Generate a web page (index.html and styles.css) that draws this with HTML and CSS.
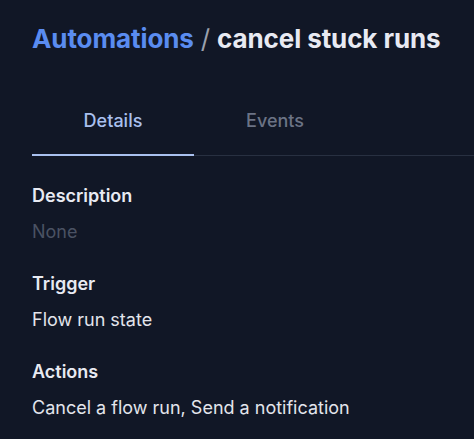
FILE: index.html
```html
<!DOCTYPE html>
<html>
<head>
<meta charset="utf-8">
<link rel="stylesheet" href="styles.css">
</head>
<body>
<div class="page">
  <h1 class="crumbs"><span class="crumb-link">Automations</span><span class="sep">/</span><span class="crumb-current">cancel stuck runs</span></h1>
  <div class="tabs">
    <div class="tab active">Details</div>
    <div class="tab">Events</div>
    <div class="tab-rest"></div>
  </div>
  <dl class="details">
    <div class="item">
      <dt>Description</dt>
      <dd class="muted">None</dd>
    </div>
    <div class="item">
      <dt>Trigger</dt>
      <dd>Flow run state</dd>
    </div>
    <div class="item">
      <dt>Actions</dt>
      <dd>Cancel a flow run, Send a notification</dd>
    </div>
  </dl>
</div>
</body>
</html>
```
FILE: styles.css
```css
html, body {
  margin: 0;
  padding: 0;
  background: #111726;
  height: 100%;
  overflow: hidden;
}
.page {
  padding: 21px 0 0 32px;
  font-family: Inter, "Noto Sans", sans-serif;
  color: #e6e8ef;
}
.crumbs {
  margin: 0;
  font-size: 26px;
  font-weight: 700;
  line-height: 36px;
  white-space: nowrap;
  letter-spacing: -0.1px;
}
.crumb-link { color: #5a8cf0; }
.sep { color: #9aa0ad; font-weight: 400; margin: 0 7px; }
.crumb-current { color: #e8eaf2; }
.tabs {
  display: flex;
  margin-top: 52px;
}
.tab {
  width: 162px;
  text-align: center;
  font-size: 18px;
  font-weight: 500;
  line-height: 24px;
  padding-bottom: 22px;
  color: #6b7385;
  border-bottom: 1px solid #283041;
}
.tab.active {
  color: #a9c0ee;
  border-bottom: 2px solid #a9c0ee;
  padding-bottom: 21px;
}
.tab-rest {
  flex: 1;
  border-bottom: 1px solid #283041;
}
.details {
  margin: 28px 0 0;
}
.item { margin-bottom: 28px; }
.item dt {
  font-size: 18px;
  font-weight: 600;
  line-height: 24px;
  color: #e8eaf2;
}
.item dd {
  margin: 12px 0 0;
  font-size: 18px;
  line-height: 24px;
  color: #e3e5ec;
}
.item dd.muted { color: #4a5263; }
```
